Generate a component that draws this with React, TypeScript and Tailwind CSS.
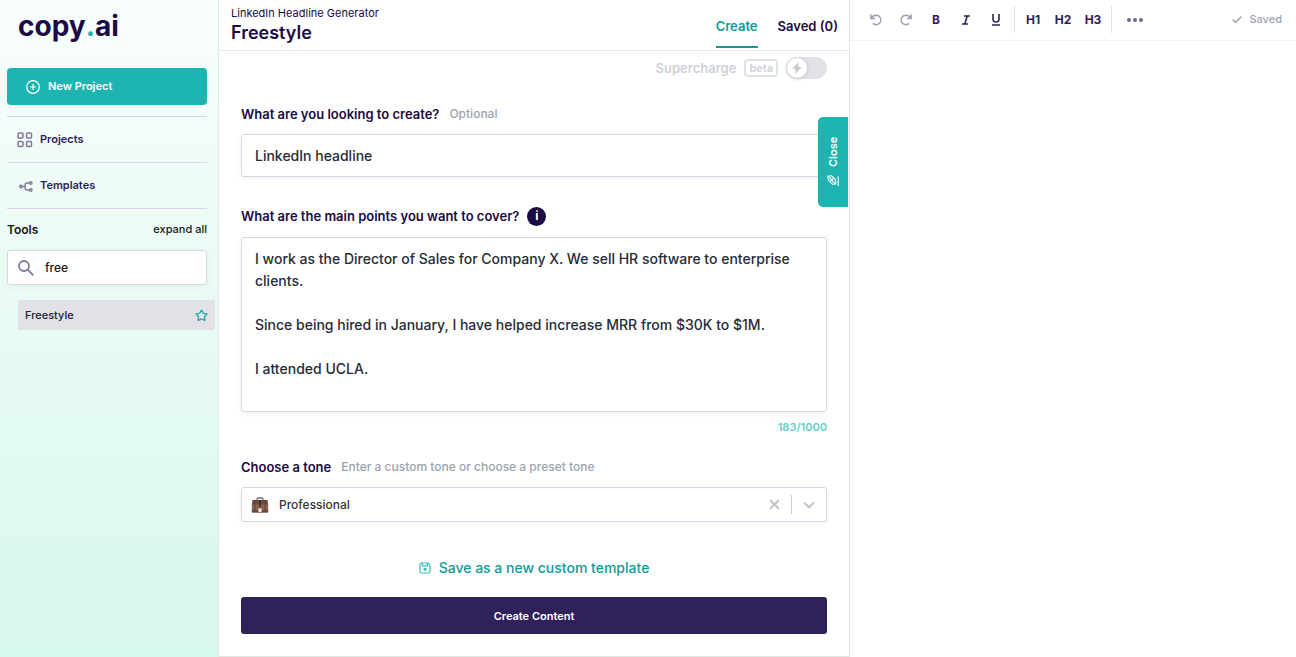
import React from 'react';
import { Check, Star, X } from 'lucide-react';

const points = `I work as the Director of Sales for Company X. We sell HR software to enterprise clients.

Since being hired in January, I have helped increase MRR from $30K to $1M.

I attended UCLA.`;

const fieldStyle = 'w-full rounded-[3px] border border-[#d9d5e6] bg-white shadow-[0_2px_6px_rgba(20,80,80,0.06)] outline-none';

const GridIcon: React.FC = () => (
  <svg className="size-4" viewBox="0 0 16 16" fill="none" stroke="#81789c" strokeWidth="1.5">
    <rect x="1" y="1" width="5" height="5" rx="1.2" />
    <rect x="9.5" y="1" width="5" height="5" rx="1.2" />
    <rect x="1" y="9.5" width="5" height="5" rx="1.2" />
    <rect x="9.5" y="9.5" width="5" height="5" rx="1.2" />
  </svg>
);

const BranchIcon: React.FC = () => (
  <svg className="size-4" viewBox="0 0 16 16" fill="none" stroke="#81789c" strokeWidth="1.4">
    <circle cx="4" cy="8.5" r="1.3" />
    <path d="M5.5 8.5h2.7M12 5H9.7a1.5 1.5 0 0 0-1.5 1.5v4a1.5 1.5 0 0 0 1.5 1.5H12" />
    <circle cx="13.8" cy="5" r="1.2" />
    <circle cx="13.8" cy="12" r="1.2" />
  </svg>
);

const SearchIcon: React.FC = () => (
  <svg className="size-4 shrink-0" viewBox="0 0 16 16" fill="none" stroke="#81789c" strokeWidth="1.8">
    <circle cx="6" cy="6" r="5" />
    <path d="m9.7 9.7 5.6 5.6" />
  </svg>
);

const UndoIcon: React.FC<{ className?: string }> = ({ className }) => (
  <svg className={className} width="14" height="14" viewBox="0 0 14 14" fill="none" stroke="#a49fb8" strokeWidth="1.5">
    <path d="M1.8 1.2v4.2H6M2 5.3C3.2 3.3 5 2.3 7.2 2.3a4.7 4.7 0 1 1-3.2 8.1" />
  </svg>
);

const BriefcaseIcon: React.FC = () => (
  <svg className="h-[18px] w-[18px] shrink-0" viewBox="0 0 18 18">
    <path d="M6 4.5V3Q6 2 7 2h4q1 0 1 1v1.5" fill="none" stroke="#77706c" strokeWidth="1.3" />
    <path d="M1.5 4h15l.7 5.5H.8z" fill="#6a4b40" />
    <path d="M.8 8.5h16.4v7.3q0 .7-.7.7h-15q-.7 0-.7-.7z" fill="#8a6553" />
    <path d="M.8 14h16.4v1.8q0 .7-.7.7h-15q-.7 0-.7-.7z" fill="#6b4a3d" />
    <path d="M3.4 4h1v12h-1zM13.6 4h1v12h-1z" fill="#5f4237" />
    <path d="M8.2 4h1.6v7H8.2z" fill="#3f2a26" />
    <rect x="7.4" y="12.5" width="3.2" height="3.6" rx=".8" fill="#f3efec" />
  </svg>
);

const Sidebar: React.FC = () => (
  <aside className="border-r border-[#dcebe5] bg-linear-to-b from-[#f8fdfb] to-[#d7f8ec] pr-[3px] pl-[7px]">
    <div className="pr-2">
      <a href="#" className="flex h-[68px] items-center pb-4 pl-[11px] text-[28px] leading-8 font-bold text-[#1b0a44]">
        copy<span className="text-[#1eb5b1]">.</span>ai
      </a>
      <button className="flex h-[37px] w-full items-center gap-2 rounded bg-[#1eb5b1] pl-[19px] text-[11px] font-semibold text-white">
        <svg className="size-[14px]" viewBox="0 0 14 14" fill="none" stroke="currentColor" strokeWidth="1.2">
          <circle cx="7" cy="7" r="6.3" />
          <path d="M7 4v6M4 7h6" />
        </svg>
        New Project
      </button>
      <nav className="mt-[11px] text-[11px] font-semibold text-[#2c1f56]">
        <a href="#" className="flex h-[46px] items-center gap-[7px] border-t border-[#d9d2e8] pl-2.5"><GridIcon />Projects</a>
        <a href="#" className="flex h-[47px] items-center gap-[7px] border-y border-[#d9d2e8] pl-2.5"><BranchIcon />Templates</a>
      </nav>
      <div className="flex h-[41px] items-center justify-between text-[#16161e]">
        <h2 className="text-[12px] font-semibold">Tools</h2>
        <button className="text-[11px] font-medium">expand all</button>
      </div>
      <label className={`${fieldStyle} flex h-[35px] items-center gap-[11px] pl-2.5`}>
        <SearchIcon />
        <input aria-label="Search tools" defaultValue="free" className="w-full min-w-0 bg-transparent text-[12px] font-medium text-[#16161e] outline-none" />
      </label>
    </div>
    <a href="#" className="mt-[15px] ml-[11px] flex h-[30px] items-center justify-between rounded-[2px] bg-[#e1e1e7] pr-[7px] pl-[7px] text-[11px] font-medium text-[#22222c]">
      Freestyle
      <Star className="size-[13px] text-[#1fada5]" strokeWidth={2.5} />
    </a>
  </aside>
);

const CreatePanel: React.FC = () => (
  <main className="relative flex flex-col border-r border-b border-[#dfe9e2] bg-white">
    <header className="flex h-[51px] shrink-0 justify-between border-b border-[#dfeee2] pr-[11px] pl-3">
      <div className="pt-[5px] text-[#1b0a44]">
        <p className="text-[11px] leading-4">LinkedIn Headline Generator</p>
        <h1 className="text-[18px] leading-6 font-semibold">Freestyle</h1>
      </div>
      <nav className="flex gap-5 text-[13px] leading-5 font-semibold text-[#1b0a44]">
        <a href="#" className="h-12 border-b-2 border-[#109a94] pt-4 text-[#109a94]">Create</a>
        <a href="#" className="h-12 pt-4">Saved (0)</a>
      </nav>
    </header>

    <form className="px-[22px] pb-[22px] text-[13px] leading-5 font-medium" onSubmit={(e) => e.preventDefault()}>
      <label className="flex h-[34px] items-center justify-end gap-2 font-semibold text-[#ced1d9]">
        Supercharge
        <span className="rounded border-2 border-[#e0e2e8] px-[3px] text-[11px] leading-3.5">beta</span>
        <span className="relative flex">
          <input type="checkbox" className="h-[22px] w-[41px] appearance-none rounded-full bg-[#e1e2e8]" />
          <span className="absolute top-px left-px flex size-5 items-center justify-center rounded-full bg-white shadow-[0_1px_4px_rgba(0,0,0,0.16)]">
            <svg className="size-3" viewBox="0 0 12 12" fill="#c6c8cd"><path d="M7.8 0 1.2 6.8h3.5L4 12l6.8-7H7z" /></svg>
          </span>
        </span>
      </label>

      <div className="mt-[19px] flex gap-2.5">
        <label htmlFor="topic" className="font-semibold text-[#1b0a44]">What are you looking to create?</label>
        <span className="text-[12px] text-[#9ca3af]">Optional</span>
      </div>
      <input id="topic" defaultValue="LinkedIn headline" className={`${fieldStyle} mt-2.5 block h-[43px] px-[13px] text-[14px] text-[#262c38]`} />

      <div className="mt-[29px] flex items-center gap-2">
        <label htmlFor="points" className="font-semibold text-[#1b0a44]">What are the main points you want to cover?</label>
        <button type="button" aria-label="More about main points" className="flex size-[19px] items-center justify-center rounded-full bg-[#1b0a44] text-[12px] font-bold text-white">i</button>
      </div>
      <textarea id="points" defaultValue={points} className={`${fieldStyle} mt-[11px] block h-[175px] resize-none px-[13px] py-2.5 text-[14px] leading-[22px] text-[#262c38]`} />
      <p className="mt-[5px] text-right text-[11px] leading-5 font-semibold text-[#62cfc7]">183/1000</p>

      <div className="mt-5 flex gap-2.5">
        <label htmlFor="tone" className="font-semibold text-[#1b0a44]">Choose a tone</label>
        <span className="text-[12px] text-[#9ca3af]">Enter a custom tone or choose a preset tone</span>
      </div>
      <div className={`${fieldStyle} mt-2.5 flex h-[35px] items-center pr-2.5 pl-[9px]`}>
        <BriefcaseIcon />
        <select id="tone" className="h-full min-w-0 flex-1 appearance-none pl-2.5 text-[12px] text-[#33353b] outline-none">
          <option>Professional</option>
        </select>
        <button type="button" aria-label="Clear tone" className="text-[#c3c4c8]"><X className="size-[15px]" strokeWidth={3.5} /></button>
        <span className="mr-2.5 ml-[9px] h-[19px] w-px bg-[#cccccc]" />
        <svg className="size-[14px]" viewBox="0 0 14 14" fill="none" stroke="#c3c4c8" strokeWidth="2" strokeLinecap="round" strokeLinejoin="round"><path d="m2.5 5 4.5 4.5L11.5 5" /></svg>
      </div>

      <button type="button" className="mx-auto mt-[34px] flex items-center gap-2 text-[14px] leading-6 text-[#109a94]">
        <svg className="size-3" viewBox="0 0 12 12" fill="none" stroke="#35bdb8" strokeWidth="1.2">
          <path d="M1 2.2Q1 1 2.2 1h6.9L11 2.9v6.9Q11 11 9.8 11H2.2Q1 11 1 9.8zM3.4 1.2v2.6h5V1.2" />
          <rect x="5.2" y="6.5" width="1.6" height="1.6" />
        </svg>
        Save as a new custom template
      </button>
      <button type="submit" className="mt-[17px] h-[37px] w-full rounded-[3px] bg-[#30215a] text-[11px] font-semibold text-white">Create Content</button>
    </form>

    <button className="absolute top-[117px] right-px flex h-[90px] w-[30px] rotate-180 items-center justify-center gap-2 rounded-r-[5px] bg-[#1eb5b1] text-[11px] font-semibold text-white [writing-mode:vertical-rl]">
      <svg className="size-3 rotate-180" viewBox="0 0 12 12" fill="none" stroke="currentColor" strokeWidth="1.1">
        <path d="M.8 1.2 3.6.8Q5.5 1 8.6 5.2L8.8 9 5.6 9.2Q2 6.8 1.2 4.4zM2.2 2.2l6.4 7.2M3.2 6.4l3-3M11.2 1.5v9.5" />
      </svg>
      Close
    </button>
  </main>
);

const Editor: React.FC = () => (
  <section className="bg-white">
    <div className="flex h-[41px] items-center border-b border-[#f1f1f3] pr-3.5 pl-[11px] pb-px text-[12px] font-bold text-[#30215a] [&>button]:flex [&>button]:h-[30px] [&>button]:w-[30px] [&>button]:items-center [&>button]:justify-center">
      <button aria-label="Undo"><UndoIcon /></button>
      <button aria-label="Redo"><UndoIcon className="-scale-x-100" /></button>
      <button>B</button>
      <button aria-label="Italic">
        <svg width="10" height="10" viewBox="0 0 10 10" fill="none" stroke="currentColor" strokeWidth="1.6"><path d="M3 1h6M1 9h6M6.2 1 3.8 9" /></svg>
      </button>
      <button aria-label="Underline">
        <svg width="10" height="12" viewBox="0 0 10 12" fill="none" stroke="currentColor" strokeWidth="1.6"><path d="M2 0v5a3 3 0 0 0 6 0V0M1 11h8" /></svg>
      </button>
      <span className="mx-[3px] h-[27px] w-px bg-[#e2e2e8]" />
      <button>H1</button>
      <button>H2</button>
      <button>H3</button>
      <span className="mr-2 ml-[3px] h-[27px] w-px bg-[#e2e2e8]" />
      <button aria-label="More">
        <svg width="16" height="4" viewBox="0 0 16 4" fill="#71678f"><circle cx="2" cy="2" r="2" /><circle cx="8" cy="2" r="2" /><circle cx="14" cy="2" r="2" /></svg>
      </button>
      <span className="ml-auto flex items-center gap-1.5 text-[11px] font-medium text-[#9ca3af]">
        <Check className="size-3" strokeWidth={3} />
        Saved
      </span>
    </div>
  </section>
);

const App: React.FC = () => {
  return (
    <div className="grid min-h-screen grid-cols-[219px_631fr_446fr] font-['Inter','Liberation_Sans',sans-serif]">
      <Sidebar />
      <CreatePanel />
      <Editor />
    </div>
  );
};

export default App;
